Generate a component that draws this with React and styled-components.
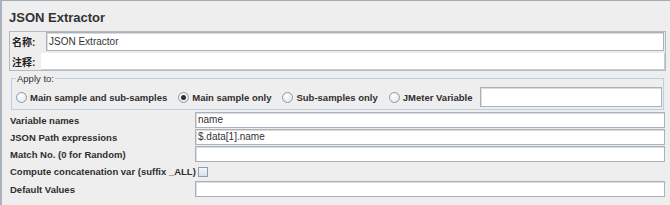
import React from "react";
import styled, { createGlobalStyle } from "styled-components";

const Global = createGlobalStyle`
  html, body { margin: 0; padding: 0; background: #eeeeee; }
  body { font-family: "Liberation Sans", Arial, sans-serif; color: #2e2e2e; }
`;

const Page = styled.div`
  width: 668px;
  height: 204px;
  border-top: 1px solid #a3adb6;
  border-left: 2px solid #aab3bb;
  background: #eeeeee;
  overflow: hidden;
`;

const Title = styled.div`
  padding: 9px 0 0 7px;
  height: 15px;
  line-height: 15px;
  font-size: 13px;
  font-weight: bold;
  color: #333;
  margin-bottom: 6px;
`;

const NamePanel = styled.div`
  margin: 0 4px 0 7px;
  border: 1px solid #b5b9bd;
  display: grid;
  grid-template-rows: 19px 17px;
  row-gap: 2px;
`;

const NameRow = styled.div`
  display: grid;
  grid-template-columns: ${(p) => p.$labelWidth}px 1fr;
  align-items: center;
  padding-right: ${(p) => p.$right}px;
`;

const CjkLabel = styled.span`
  padding-left: 2px;
  font-family: "Liberation Sans", "Noto Sans CJK SC", sans-serif;
  font-size: 10px;
  font-weight: bold;
  color: #222;
`;

const TextField = styled.div`
  box-sizing: border-box;
  height: ${(p) => p.$h || 16}px;
  background: #ffffff;
  border: 1px solid #a9b1b9;
  box-shadow: inset 1px 1px 0 #d9dde1;
  font-size: 10px;
  line-height: ${(p) => (p.$h || 16) - 2}px;
  padding-left: 2px;
  color: #333;
  white-space: nowrap;
  overflow: hidden;
`;

const TextArea = styled.div`
  height: 17px;
  box-sizing: border-box;
  background: #ffffff;
  border-bottom: 1px solid #c9cdd1;
  border-right: 1px solid #c9cdd1;
`;

const Fieldset = styled.div`
  position: relative;
  margin: 7px 6px 0 9px;
  border: 1px solid #b8cfe6;
  padding: 8px 1px 2px 4px;
  display: flex;
  align-items: center;
`;

const Legend = styled.span`
  position: absolute;
  top: -6px;
  left: 4px;
  padding: 0 1px;
  background: #eeeeee;
  font-size: 9.5px;
  line-height: 11px;
  color: #333;
`;

const RadioItem = styled.label`
  display: flex;
  align-items: center;
  gap: 3px;
  margin-right: 11px;
  font-size: 9.5px;
  font-weight: bold;
  color: #2e2e2e;
  white-space: nowrap;
`;

const RadioCircle = styled.span`
  width: 11px;
  height: 11px;
  box-sizing: border-box;
  border-radius: 50%;
  border: 1px solid #8d99a5;
  background: radial-gradient(circle at 40% 35%, #ffffff 0%, #e6ebf0 70%, #d3dbe3 100%);
  display: flex;
  align-items: center;
  justify-content: center;
  &::after {
    content: "";
    width: 5px;
    height: 5px;
    border-radius: 50%;
    background: ${(p) => (p.$on ? "#2a2f35" : "transparent")};
  }
`;

const VarInput = styled(TextField)`
  flex: 1;
  margin-left: -3px;
`;

const Form = styled.div`
  margin: 2px 5px 0 8px;
  display: grid;
  grid-template-columns: 185px 1fr;
  grid-template-rows: 16px 16px 16px 17px 16px;
  row-gap: 1px;
  align-items: center;
`;

const FieldLabel = styled.span`
  font-size: 9.5px;
  font-weight: bold;
  color: #2e2e2e;
  white-space: nowrap;
`;

const CheckBox = styled.span`
  width: 10px;
  height: 10px;
  box-sizing: border-box;
  margin-left: 3px;
  border: 1px solid #8f9cab;
  background: linear-gradient(#f4f7fa, #d7e0e9);
`;

const radios = [
  { label: "Main sample and sub-samples", on: false },
  { label: "Main sample only", on: true },
  { label: "Sub-samples only", on: false },
  { label: "JMeter Variable", on: false },
];

const fields = [
  { label: "Variable names", value: "name" },
  { label: "JSON Path expressions", value: "$.data[1].name" },
  { label: "Match No. (0 for Random)", value: "" },
  { label: "Compute concatenation var (suffix _ALL)", check: true },
  { label: "Default Values", value: "" },
];

export default function App() {
  return (
    <>
      <Global />
      <Page>
        <Title>JSON Extractor</Title>
        <NamePanel>
          <NameRow $labelWidth={36} $right={1}>
            <CjkLabel>名称:</CjkLabel>
            <TextField $h={19}>JSON Extractor</TextField>
          </NameRow>
          <NameRow $labelWidth={31} $right={0}>
            <CjkLabel>注释:</CjkLabel>
            <TextArea />
          </NameRow>
        </NamePanel>
        <Fieldset>
          <Legend>Apply to:</Legend>
          {radios.map((r) => (
            <RadioItem key={r.label}>
              <RadioCircle $on={r.on} />
              {r.label}
            </RadioItem>
          ))}
          <VarInput $h={20} />
        </Fieldset>
        <Form>
          {fields.map((f) => (
            <React.Fragment key={f.label}>
              <FieldLabel>{f.label}</FieldLabel>
              {f.check ? <CheckBox /> : <TextField $h={16}>{f.value}</TextField>}
            </React.Fragment>
          ))}
        </Form>
      </Page>
    </>
  );
}
